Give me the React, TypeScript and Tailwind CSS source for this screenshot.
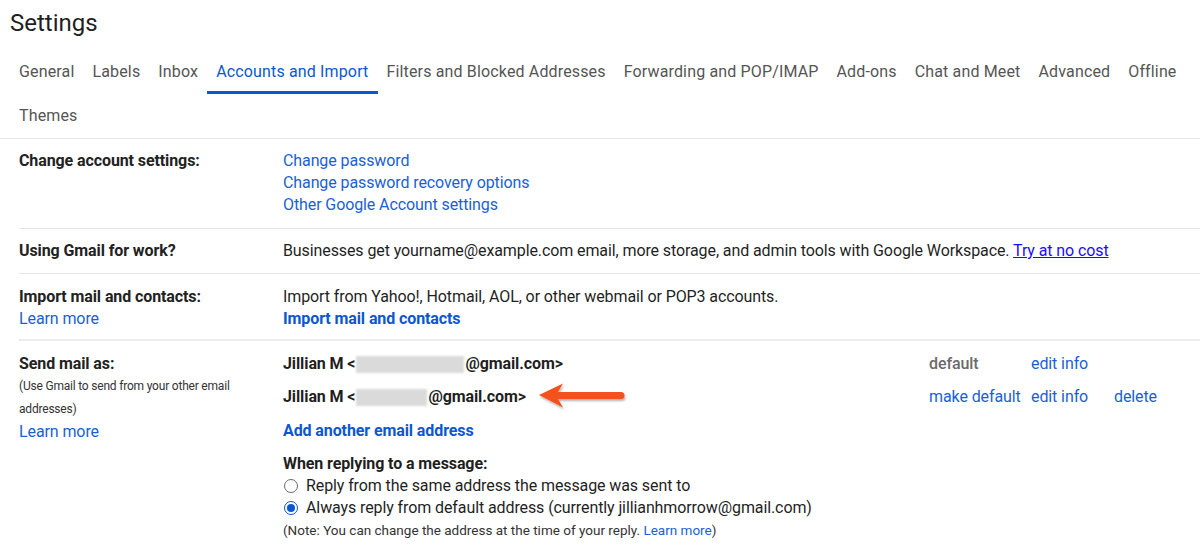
const tabRows = [
  [
    "General",
    "Labels",
    "Inbox",
    "Accounts and Import",
    "Filters and Blocked Addresses",
    "Forwarding and POP/IMAP",
    "Add-ons",
    "Chat and Meet",
    "Advanced",
    "Offline",
  ],
  ["Themes"],
];

const link = "text-[#1a5fd6] cursor-pointer";

function Arrow() {
  return (
    <svg width="92" height="30" viewBox="0 0 92 30" className="ml-[10px] -my-2">
      <defs>
        <filter id="sh" x="-10%" y="-30%" width="130%" height="170%">
          <feDropShadow dx="1" dy="2" stdDeviation="1.2" floodColor="#000" floodOpacity="0.3" />
        </filter>
      </defs>
      <g filter="url(#sh)">
        <path d="M3 13 L27 1.5 L22 10 L85 10 Q88.5 10 88.5 13.5 Q88.5 17 85 17 L22 17 L27 25.5 Z" fill="#f4511e" />
      </g>
    </svg>
  );
}

function Redacted({ w }: { w: number }) {
  return (
    <span
      className="inline-block h-[17px] bg-[#dadada] blur-[1px] align-middle mx-[1px]"
      style={{ width: w }}
    />
  );
}

function Radio({ checked, children }: { checked?: boolean; children: React.ReactNode }) {
  return (
    <div className="flex items-center h-[22px]">
      <span
        className={
          "w-[14px] h-[14px] rounded-full border flex items-center justify-center ml-[1px] mr-[8px] " +
          (checked ? "border-[#0b57d0] border-[1.5px]" : "border-[#6b6b6b]")
        }
      >
        {checked && <span className="w-[8px] h-[8px] rounded-full bg-[#0b57d0]" />}
      </span>
      <span>{children}</span>
    </div>
  );
}

export default function App() {
  return (
    <div className="w-[1200px] h-[550px] overflow-hidden bg-white text-[#1f1f1f] font-['Roboto',sans-serif] text-[16px]">
      <div className="px-[10px] pt-[8px] text-[24px] leading-[30px] text-[#1f1f1f]">Settings</div>

      <div className="mt-[12px] border-b border-[#e6e6e6] px-[10px] tracking-[0.15px]">
        {tabRows.map((row, i) => (
          <div key={i} className="flex">
            {row.map((t) => {
              const active = t === "Accounts and Import";
              return (
                <div
                  key={t}
                  className={
                    "h-[44px] px-[9px] flex items-center border-b-[3px] pt-[3px] whitespace-nowrap " +
                    (active ? "border-[#0b57d0] text-[#0b57d0]" : "border-transparent text-[#555]")
                  }
                >
                  {t}
                </div>
              );
            })}
          </div>
        ))}
      </div>

      <div className="ml-[19px] leading-[22px] tracking-[-0.1px]">
        {/* Change account settings */}
        <div className="flex border-b border-[#e6e6e6] pt-[11px] pb-[12px]">
          <div className="w-[264px] font-bold text-[#222]">Change account settings:</div>
          <div className="flex flex-col">
            <span className={link}>Change password</span>
            <span className={link}>Change password recovery options</span>
            <span className={link}>Other Google Account settings</span>
          </div>
        </div>

        {/* Gmail for work */}
        <div className="flex border-b border-[#e6e6e6] py-[11px]">
          <div className="w-[264px] font-bold text-[#222]">Using Gmail for work?</div>
          <div>
            Businesses get yourname@example.com email, more storage, and admin tools with Google Workspace.{" "}
            <span className="text-[#1a0dff] underline">Try at no cost</span>
          </div>
        </div>

        {/* Import */}
        <div className="flex border-b-2 border-[#ececec] pt-[12px] pb-[9px]">
          <div className="w-[264px] flex flex-col">
            <span className="font-bold text-[#222]">Import mail and contacts:</span>
            <span className={link}>Learn more</span>
          </div>
          <div className="flex flex-col">
            <span>Import from Yahoo!, Hotmail, AOL, or other webmail or POP3 accounts.</span>
            <span className="font-bold text-[#0b57d0]">Import mail and contacts</span>
          </div>
        </div>

        {/* Send mail as */}
        <div className="flex pt-[12px]">
          <div className="w-[264px] flex flex-col">
            <span className="font-bold text-[#222]">Send mail as:</span>
            <span className="text-[12px] leading-[23px] tracking-[-0.2px] text-[#333]">(Use Gmail to send from your other email</span>
            <span className="text-[12px] leading-[22px] tracking-[-0.2px] text-[#333]">addresses)</span>
            <span className={link + " leading-[24px]"}>Learn more</span>
          </div>
          <div className="flex-1 flex flex-col">
            <div className="grid grid-cols-[646px_102px_83px_1fr] h-[33px] items-start">
              <div className="font-bold flex items-center h-[22px]">
                Jillian M &lt;<Redacted w={108} />@gmail.com&gt;
              </div>
              <div className="font-medium text-[#6b6b6b]">default</div>
              <div className={link}>edit info</div>
              <div />
            </div>
            <div className="grid grid-cols-[646px_102px_83px_1fr] h-[34px] items-start">
              <div className="font-bold flex items-center h-[22px]">
                Jillian M &lt;<Redacted w={71} />@gmail.com&gt;
                <Arrow />
              </div>
              <div className={link}>make default</div>
              <div className={link}>edit info</div>
              <div className={link}>delete</div>
            </div>
            <div className="h-[33px]">
              <span className="font-bold text-[#0b57d0]">Add another email address</span>
            </div>
            <div className="font-bold">When replying to a message:</div>
            <Radio>Reply from the same address the message was sent to</Radio>
            <Radio checked>Always reply from default address (currently jillianhmorrow@gmail.com)</Radio>
            <div className="text-[13.5px] tracking-normal text-[#333]">
              (Note: You can change the address at the time of your reply. <span className={link}>Learn more</span>)
            </div>
          </div>
        </div>
      </div>
    </div>
  );
}
